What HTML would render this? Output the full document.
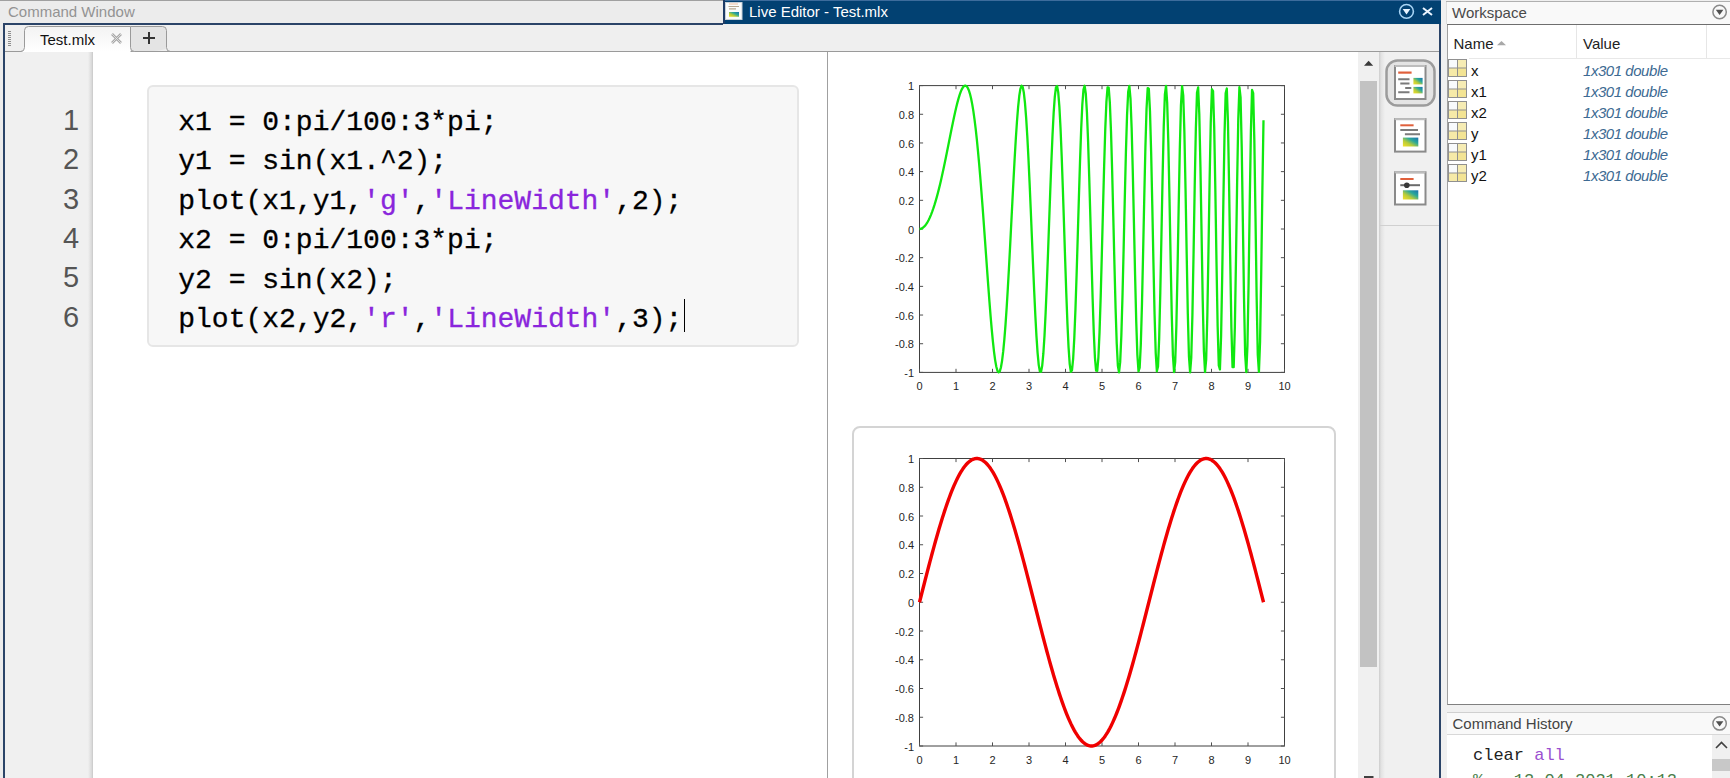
<!DOCTYPE html>
<html><head><meta charset="utf-8">
<style>
*{margin:0;padding:0;box-sizing:border-box}
html,body{width:1730px;height:778px;overflow:hidden;background:#ececec;font-family:"Liberation Sans",sans-serif;position:relative}
.a{position:absolute}
.cl{position:absolute;left:178.25px;height:30px;line-height:30px;font-family:"Liberation Mono",monospace;font-size:28px;color:#000;white-space:pre;-webkit-text-stroke:0.3px currentColor}
.str{color:#8a26dc}
.ln{position:absolute;left:5.7px;width:73.5px;text-align:right;height:32px;line-height:32px;font-size:29px;color:#555}
.wsname{position:absolute;left:1471px;height:21px;line-height:21px;font-size:15px;color:#111}
.wsval{position:absolute;left:1583px;height:21px;line-height:21px;font-size:15px;font-style:italic;letter-spacing:-0.45px;color:#3d6a92}
</style></head><body>
<svg width="0" height="0" style="position:absolute"><defs>
<linearGradient id="par" x1="0" y1="1" x2="1" y2="0"><stop offset="0" stop-color="#f5e02a"/><stop offset="0.35" stop-color="#b8cc3a"/><stop offset="0.65" stop-color="#2aa89a"/><stop offset="1" stop-color="#1a6fb0"/></linearGradient>
</defs></svg>
<!-- top strip -->
<div class="a" style="left:0;top:0;width:723px;height:1px;background:#a0a0a0"></div>
<div class="a" style="left:8px;top:3px;height:18px;line-height:18px;font-size:15px;color:#939393">Command Window</div>
<!-- live editor title -->
<div class="a" style="left:723px;top:0;width:718px;height:24px;background:#024172"></div>
<div class="a" style="left:723px;top:0;width:718px;height:1px;background:#3d6c9c"></div>
<div class="a" style="left:722.5px;top:0;width:2px;height:24px;background:#1e3c66"></div>
<div class="a" style="left:749px;top:3px;height:18px;line-height:18px;font-size:15px;color:#fff">Live Editor - Test.mlx</div>
<!-- blue frame -->
<div class="a" style="left:3px;top:23px;width:720px;height:2px;background:#2b4468"></div>
<div class="a" style="left:3px;top:23px;width:2px;height:755px;background:#2b4468"></div>
<div class="a" style="left:1439px;top:24px;width:2px;height:754px;background:#2b4468"></div>
<!-- tab bar -->
<div class="a" style="left:5px;top:25px;width:1434px;height:26px;background:#efefef"></div>
<div class="a" style="left:5px;top:51px;width:1434px;height:1px;background:#9a9a9a"></div>

<svg class="a" style="left:0;top:0" width="140" height="60" viewBox="0 0 140 60"><defs><linearGradient id="tabg" x1="0" y1="0" x2="0" y2="1"><stop offset="0" stop-color="#f3f3f3"/><stop offset="1" stop-color="#fff"/></linearGradient></defs>
<path d="M24.5,30.5Q24.5,26.5 28.5,26.5H130.5V52H20.5Q24.5,51.5 24.5,47.5Z" fill="url(#tabg)"/>
<path d="M5,51.5H20.5Q24.5,51.5 24.5,47.5V30.5Q24.5,26.5 28.5,26.5H130.5" fill="none" stroke="#9a9a9a" stroke-width="1"/></svg>
<div class="a" style="left:40px;top:30.5px;height:18px;line-height:18px;font-size:15px;color:#111">Test.mlx</div>
<svg class="a" style="left:0;top:0" width="200" height="60" viewBox="0 0 200 60"><path d="M130.5,26.5H162.5Q166.5,26.5 166.5,30.5V47.5Q166.5,51.5 134.5,51.5Q130.5,51.5 130.5,47.5Z" fill="#e4e4e4"/><path d="M130.5,26.5H162.5Q166.5,26.5 166.5,30.5V47.5Q166.5,51.5 170.5,51.5M130.5,26.5V47.5Q130.5,51.5 134.5,51.5H167" fill="none" stroke="#9a9a9a" stroke-width="1"/></svg>
<div class="a" style="left:142.8px;top:36.9px;width:12px;height:2.2px;background:#333"></div>
<div class="a" style="left:147.8px;top:32px;width:2.2px;height:12px;background:#333"></div>
<!-- gutter -->
<div class="a" style="left:5px;top:52px;width:88px;height:726px;background:#f0f0f0"></div>
<div class="a" style="left:88px;top:52px;width:5px;height:726px;background:linear-gradient(to right,#f0f0f0,#dadada 70%,#c8c8c8)"></div>
<div class="ln" style="top:104.00px">1</div>
<div class="ln" style="top:143.37px">2</div>
<div class="ln" style="top:182.74px">3</div>
<div class="ln" style="top:222.11px">4</div>
<div class="ln" style="top:261.48px">5</div>
<div class="ln" style="top:300.85px">6</div>

<!-- editor -->
<div class="a" style="left:93px;top:52px;width:734px;height:726px;background:#fff"></div>
<div class="a" style="left:147px;top:85px;width:652px;height:262px;background:#f7f7f7;border:2px solid #e6e6e6;border-radius:6px"></div>
<div class="cl" style="top:108.10px">x1 = 0:pi/100:3*pi;</div>
<div class="cl" style="top:147.47px">y1 = sin(x1.^2);</div>
<div class="cl" style="top:186.84px">plot(x1,y1,<span class="str">'g'</span>,<span class="str">'LineWidth'</span>,2);</div>
<div class="cl" style="top:226.21px">x2 = 0:pi/100:3*pi;</div>
<div class="cl" style="top:265.58px">y2 = sin(x2);</div>
<div class="cl" style="top:304.95px">plot(x2,y2,<span class="str">'r'</span>,<span class="str">'LineWidth'</span>,3);</div>

<div class="a" style="left:683.5px;top:299px;width:1.6px;height:33px;background:#000"></div>
<div class="a" style="left:827px;top:52px;width:1px;height:726px;background:#a0a0a0"></div>
<!-- output pane -->
<div class="a" style="left:828px;top:52px;width:530px;height:726px;background:#fff"></div>
<div class="a" style="left:852px;top:426px;width:484px;height:400px;border:2px solid #d4d4d4;border-radius:8px"></div>
<svg class="a" style="left:0;top:0" width="1730" height="778" viewBox="0 0 1730 778"><rect x="919.5" y="85.6" width="365.0" height="286.79999999999995" fill="none" stroke="#404040" stroke-width="1"/><path d="M919.50,372.4V368.80M919.50,85.6V89.20M919.5,85.60H923.10M1284.5,85.60H1280.90M956.00,372.4V368.80M956.00,85.6V89.20M919.5,114.28H923.10M1284.5,114.28H1280.90M992.50,372.4V368.80M992.50,85.6V89.20M919.5,142.96H923.10M1284.5,142.96H1280.90M1029.00,372.4V368.80M1029.00,85.6V89.20M919.5,171.64H923.10M1284.5,171.64H1280.90M1065.50,372.4V368.80M1065.50,85.6V89.20M919.5,200.32H923.10M1284.5,200.32H1280.90M1102.00,372.4V368.80M1102.00,85.6V89.20M919.5,229.00H923.10M1284.5,229.00H1280.90M1138.50,372.4V368.80M1138.50,85.6V89.20M919.5,257.68H923.10M1284.5,257.68H1280.90M1175.00,372.4V368.80M1175.00,85.6V89.20M919.5,286.36H923.10M1284.5,286.36H1280.90M1211.50,372.4V368.80M1211.50,85.6V89.20M919.5,315.04H923.10M1284.5,315.04H1280.90M1248.00,372.4V368.80M1248.00,85.6V89.20M919.5,343.72H923.10M1284.5,343.72H1280.90M1284.50,372.4V368.80M1284.50,85.6V89.20M919.5,372.40H923.10M1284.5,372.40H1280.90" stroke="#505050" stroke-width="1" fill="none"/><g font-family="Liberation Sans" font-size="11" fill="#262626"><text x="919.50" y="389.90" text-anchor="middle">0</text><text x="956.00" y="389.90" text-anchor="middle">1</text><text x="992.50" y="389.90" text-anchor="middle">2</text><text x="1029.00" y="389.90" text-anchor="middle">3</text><text x="1065.50" y="389.90" text-anchor="middle">4</text><text x="1102.00" y="389.90" text-anchor="middle">5</text><text x="1138.50" y="389.90" text-anchor="middle">6</text><text x="1175.00" y="389.90" text-anchor="middle">7</text><text x="1211.50" y="389.90" text-anchor="middle">8</text><text x="1248.00" y="389.90" text-anchor="middle">9</text><text x="1284.50" y="389.90" text-anchor="middle">10</text><text x="914.00" y="90.30" text-anchor="end">1</text><text x="914.00" y="118.98" text-anchor="end">0.8</text><text x="914.00" y="147.66" text-anchor="end">0.6</text><text x="914.00" y="176.34" text-anchor="end">0.4</text><text x="914.00" y="205.02" text-anchor="end">0.2</text><text x="914.00" y="233.70" text-anchor="end">0</text><text x="914.00" y="262.38" text-anchor="end">-0.2</text><text x="914.00" y="291.06" text-anchor="end">-0.4</text><text x="914.00" y="319.74" text-anchor="end">-0.6</text><text x="914.00" y="348.42" text-anchor="end">-0.8</text><text x="914.00" y="377.10" text-anchor="end">-1</text></g><path d="M919.50,229.00 L920.65,228.86 L921.79,228.43 L922.94,227.73 L924.09,226.74 L925.23,225.46 L926.38,223.91 L927.53,222.07 L928.67,219.95 L929.82,217.55 L930.97,214.87 L932.11,211.92 L933.26,208.69 L934.41,205.19 L935.55,201.43 L936.70,197.42 L937.85,193.15 L938.99,188.65 L940.14,183.92 L941.29,178.98 L942.43,173.85 L943.58,168.54 L944.73,163.08 L945.87,157.49 L947.02,151.80 L948.17,146.05 L949.31,140.27 L950.46,134.50 L951.61,128.79 L952.75,123.18 L953.90,117.72 L955.05,112.48 L956.19,107.51 L957.34,102.88 L958.49,98.65 L959.63,94.88 L960.78,91.66 L961.93,89.05 L963.07,87.12 L964.22,85.95 L965.37,85.60 L966.51,86.16 L967.66,87.67 L968.81,90.20 L969.95,93.81 L971.10,98.52 L972.25,104.38 L973.39,111.41 L974.54,119.61 L975.69,128.98 L976.83,139.48 L977.98,151.07 L979.13,163.69 L980.27,177.25 L981.42,191.63 L982.57,206.71 L983.71,222.34 L984.86,238.32 L986.01,254.47 L987.15,270.56 L988.30,286.35 L989.45,301.60 L990.59,316.04 L991.74,329.41 L992.89,341.42 L994.03,351.81 L995.18,360.33 L996.33,366.74 L997.47,370.82 L998.62,372.39 L999.77,371.30 L1000.91,367.47 L1002.06,360.85 L1003.21,351.47 L1004.35,339.40 L1005.50,324.79 L1006.65,307.89 L1007.79,288.97 L1008.94,268.43 L1010.09,246.67 L1011.23,224.22 L1012.38,201.60 L1013.53,179.41 L1014.67,158.25 L1015.82,138.74 L1016.97,121.49 L1018.11,107.08 L1019.26,96.03 L1020.41,88.78 L1021.55,85.69 L1022.70,87.01 L1023.85,92.84 L1024.99,103.13 L1026.14,117.70 L1027.29,136.18 L1028.43,158.06 L1029.58,182.67 L1030.73,209.21 L1031.87,236.74 L1033.02,264.26 L1034.17,290.71 L1035.31,315.01 L1036.46,336.12 L1037.61,353.09 L1038.75,365.09 L1039.90,371.46 L1041.05,371.77 L1042.19,365.82 L1043.34,353.71 L1044.49,335.81 L1045.63,312.80 L1046.78,285.64 L1047.93,255.51 L1049.07,223.82 L1050.22,192.11 L1051.37,162.00 L1052.52,135.07 L1053.66,112.85 L1054.81,96.63 L1055.96,87.45 L1057.10,86.00 L1058.25,92.56 L1059.40,106.95 L1060.54,128.53 L1061.69,156.20 L1062.84,188.45 L1063.98,223.41 L1065.13,258.99 L1066.28,292.97 L1067.42,323.13 L1068.57,347.42 L1069.72,364.12 L1070.86,371.92 L1072.01,370.09 L1073.16,358.55 L1074.30,337.88 L1075.45,309.35 L1076.60,274.83 L1077.74,236.72 L1078.89,197.77 L1080.04,160.90 L1081.18,128.95 L1082.33,104.50 L1083.48,89.64 L1084.62,85.75 L1085.77,93.36 L1086.92,112.10 L1088.06,140.64 L1089.21,176.77 L1090.36,217.59 L1091.50,259.66 L1092.65,299.32 L1093.80,333.02 L1094.94,357.61 L1096.09,370.68 L1097.24,370.79 L1098.38,357.70 L1099.53,332.38 L1100.68,297.03 L1101.82,254.87 L1102.97,209.92 L1104.12,166.59 L1105.26,129.27 L1106.41,101.87 L1107.56,87.39 L1108.70,87.58 L1109.85,102.69 L1111.00,131.36 L1112.14,170.74 L1113.29,216.72 L1114.44,264.31 L1115.58,308.23 L1116.73,343.43 L1117.88,365.72 L1119.02,372.31 L1120.17,362.14 L1121.32,336.15 L1122.46,297.18 L1123.61,249.73 L1124.76,199.49 L1125.90,152.63 L1127.05,115.09 L1128.20,91.78 L1129.34,85.91 L1130.49,98.52 L1131.64,128.27 L1132.78,171.49 L1133.93,222.62 L1135.08,274.87 L1136.22,321.13 L1137.37,354.91 L1138.52,371.32 L1139.66,367.76 L1140.81,344.45 L1141.96,304.43 L1143.10,253.25 L1144.25,198.27 L1145.40,147.58 L1146.54,108.82 L1147.69,88.05 L1148.84,88.71 L1149.98,110.99 L1151.13,151.77 L1152.28,204.87 L1153.42,262.06 L1154.57,314.21 L1155.72,352.81 L1156.86,371.35 L1158.01,366.48 L1159.16,338.69 L1160.30,292.32 L1161.45,235.00 L1162.60,176.39 L1163.74,126.62 L1164.89,94.50 L1166.04,85.94 L1167.18,102.78 L1168.33,142.34 L1169.48,197.76 L1170.62,259.13 L1171.77,315.21 L1172.92,355.49 L1174.06,372.20 L1175.21,361.86 L1176.36,326.09 L1177.50,271.46 L1178.65,208.35 L1179.80,149.03 L1180.94,105.28 L1182.09,86.05 L1183.24,95.51 L1184.38,132.11 L1185.53,188.69 L1186.68,253.83 L1187.82,314.05 L1188.97,356.66 L1190.12,372.40 L1191.26,357.58 L1192.41,315.01 L1193.56,253.61 L1194.70,186.59 L1195.85,128.66 L1197.00,92.84 L1198.14,87.42 L1199.29,114.00 L1200.44,166.89 L1201.58,234.25 L1202.73,300.65 L1203.88,350.57 L1205.02,372.06 L1206.17,359.70 L1207.32,316.05 L1208.46,251.27 L1209.61,180.84 L1210.76,121.94 L1211.90,89.23 L1213.05,91.14 L1214.20,127.57 L1215.34,189.73 L1216.49,262.09 L1217.64,326.23 L1218.78,365.50 L1219.93,369.41 L1221.08,336.54 L1222.22,275.18 L1223.37,201.32 L1224.52,134.62 L1225.66,93.17 L1226.81,88.50 L1227.96,122.30 L1229.10,185.64 L1230.25,261.24 L1231.40,328.07 L1232.54,367.20 L1233.69,367.22 L1234.84,327.72 L1235.98,259.67 L1237.13,182.50 L1238.28,118.66 L1239.42,87.06 L1240.57,97.41 L1241.72,147.04 L1242.86,221.44 L1244.01,298.36 L1245.16,354.41 L1246.30,372.18 L1247.45,345.81 L1248.60,283.05 L1249.74,203.18 L1250.89,131.20 L1252.04,90.02 L1253.18,93.09 L1254.33,139.86 L1255.48,215.62 L1256.62,295.97 L1257.77,354.60 L1258.92,371.94 L1260.06,341.84 L1261.21,273.91 L1262.36,190.66 L1263.50,120.15" fill="none" stroke="#10e810" stroke-width="2.3" stroke-linejoin="round" stroke-linecap="butt"/><rect x="919.5" y="458.5" width="365.0" height="287.5" fill="none" stroke="#404040" stroke-width="1"/><path d="M919.50,746.0V742.40M919.50,458.5V462.10M919.5,458.50H923.10M1284.5,458.50H1280.90M956.00,746.0V742.40M956.00,458.5V462.10M919.5,487.25H923.10M1284.5,487.25H1280.90M992.50,746.0V742.40M992.50,458.5V462.10M919.5,516.00H923.10M1284.5,516.00H1280.90M1029.00,746.0V742.40M1029.00,458.5V462.10M919.5,544.75H923.10M1284.5,544.75H1280.90M1065.50,746.0V742.40M1065.50,458.5V462.10M919.5,573.50H923.10M1284.5,573.50H1280.90M1102.00,746.0V742.40M1102.00,458.5V462.10M919.5,602.25H923.10M1284.5,602.25H1280.90M1138.50,746.0V742.40M1138.50,458.5V462.10M919.5,631.00H923.10M1284.5,631.00H1280.90M1175.00,746.0V742.40M1175.00,458.5V462.10M919.5,659.75H923.10M1284.5,659.75H1280.90M1211.50,746.0V742.40M1211.50,458.5V462.10M919.5,688.50H923.10M1284.5,688.50H1280.90M1248.00,746.0V742.40M1248.00,458.5V462.10M919.5,717.25H923.10M1284.5,717.25H1280.90M1284.50,746.0V742.40M1284.50,458.5V462.10M919.5,746.00H923.10M1284.5,746.00H1280.90" stroke="#505050" stroke-width="1" fill="none"/><g font-family="Liberation Sans" font-size="11" fill="#262626"><text x="919.50" y="763.50" text-anchor="middle">0</text><text x="956.00" y="763.50" text-anchor="middle">1</text><text x="992.50" y="763.50" text-anchor="middle">2</text><text x="1029.00" y="763.50" text-anchor="middle">3</text><text x="1065.50" y="763.50" text-anchor="middle">4</text><text x="1102.00" y="763.50" text-anchor="middle">5</text><text x="1138.50" y="763.50" text-anchor="middle">6</text><text x="1175.00" y="763.50" text-anchor="middle">7</text><text x="1211.50" y="763.50" text-anchor="middle">8</text><text x="1248.00" y="763.50" text-anchor="middle">9</text><text x="1284.50" y="763.50" text-anchor="middle">10</text><text x="914.00" y="463.20" text-anchor="end">1</text><text x="914.00" y="491.95" text-anchor="end">0.8</text><text x="914.00" y="520.70" text-anchor="end">0.6</text><text x="914.00" y="549.45" text-anchor="end">0.4</text><text x="914.00" y="578.20" text-anchor="end">0.2</text><text x="914.00" y="606.95" text-anchor="end">0</text><text x="914.00" y="635.70" text-anchor="end">-0.2</text><text x="914.00" y="664.45" text-anchor="end">-0.4</text><text x="914.00" y="693.20" text-anchor="end">-0.6</text><text x="914.00" y="721.95" text-anchor="end">-0.8</text><text x="914.00" y="750.70" text-anchor="end">-1</text></g><path d="M919.50,602.25 L920.65,597.73 L921.79,593.22 L922.94,588.72 L924.09,584.23 L925.23,579.76 L926.38,575.31 L927.53,570.89 L928.67,566.50 L929.82,562.15 L930.97,557.83 L932.11,553.56 L933.26,549.33 L934.41,545.16 L935.55,541.04 L936.70,536.99 L937.85,533.00 L938.99,529.08 L940.14,525.22 L941.29,521.45 L942.43,517.76 L943.58,514.14 L944.73,510.62 L945.87,507.19 L947.02,503.85 L948.17,500.60 L949.31,497.46 L950.46,494.42 L951.61,491.49 L952.75,488.67 L953.90,485.95 L955.05,483.36 L956.19,480.88 L957.34,478.52 L958.49,476.28 L959.63,474.17 L960.78,472.18 L961.93,470.32 L963.07,468.59 L964.22,467.00 L965.37,465.54 L966.51,464.21 L967.66,463.02 L968.81,461.96 L969.95,461.05 L971.10,460.27 L972.25,459.63 L973.39,459.14 L974.54,458.78 L975.69,458.57 L976.83,458.50 L977.98,458.57 L979.13,458.78 L980.27,459.14 L981.42,459.63 L982.57,460.27 L983.71,461.05 L984.86,461.96 L986.01,463.02 L987.15,464.21 L988.30,465.54 L989.45,467.00 L990.59,468.59 L991.74,470.32 L992.89,472.18 L994.03,474.17 L995.18,476.28 L996.33,478.52 L997.47,480.88 L998.62,483.36 L999.77,485.95 L1000.91,488.67 L1002.06,491.49 L1003.21,494.42 L1004.35,497.46 L1005.50,500.60 L1006.65,503.85 L1007.79,507.19 L1008.94,510.62 L1010.09,514.14 L1011.23,517.76 L1012.38,521.45 L1013.53,525.22 L1014.67,529.08 L1015.82,533.00 L1016.97,536.99 L1018.11,541.04 L1019.26,545.16 L1020.41,549.33 L1021.55,553.56 L1022.70,557.83 L1023.85,562.15 L1024.99,566.50 L1026.14,570.89 L1027.29,575.31 L1028.43,579.76 L1029.58,584.23 L1030.73,588.72 L1031.87,593.22 L1033.02,597.73 L1034.17,602.25 L1035.31,606.77 L1036.46,611.28 L1037.61,615.78 L1038.75,620.27 L1039.90,624.74 L1041.05,629.19 L1042.19,633.61 L1043.34,638.00 L1044.49,642.35 L1045.63,646.67 L1046.78,650.94 L1047.93,655.17 L1049.07,659.34 L1050.22,663.46 L1051.37,667.51 L1052.52,671.50 L1053.66,675.42 L1054.81,679.28 L1055.96,683.05 L1057.10,686.74 L1058.25,690.36 L1059.40,693.88 L1060.54,697.31 L1061.69,700.65 L1062.84,703.90 L1063.98,707.04 L1065.13,710.08 L1066.28,713.01 L1067.42,715.83 L1068.57,718.55 L1069.72,721.14 L1070.86,723.62 L1072.01,725.98 L1073.16,728.22 L1074.30,730.33 L1075.45,732.32 L1076.60,734.18 L1077.74,735.91 L1078.89,737.50 L1080.04,738.96 L1081.18,740.29 L1082.33,741.48 L1083.48,742.54 L1084.62,743.45 L1085.77,744.23 L1086.92,744.87 L1088.06,745.36 L1089.21,745.72 L1090.36,745.93 L1091.50,746.00 L1092.65,745.93 L1093.80,745.72 L1094.94,745.36 L1096.09,744.87 L1097.24,744.23 L1098.38,743.45 L1099.53,742.54 L1100.68,741.48 L1101.82,740.29 L1102.97,738.96 L1104.12,737.50 L1105.26,735.91 L1106.41,734.18 L1107.56,732.32 L1108.70,730.33 L1109.85,728.22 L1111.00,725.98 L1112.14,723.62 L1113.29,721.14 L1114.44,718.55 L1115.58,715.83 L1116.73,713.01 L1117.88,710.08 L1119.02,707.04 L1120.17,703.90 L1121.32,700.65 L1122.46,697.31 L1123.61,693.88 L1124.76,690.36 L1125.90,686.74 L1127.05,683.05 L1128.20,679.28 L1129.34,675.42 L1130.49,671.50 L1131.64,667.51 L1132.78,663.46 L1133.93,659.34 L1135.08,655.17 L1136.22,650.94 L1137.37,646.67 L1138.52,642.35 L1139.66,638.00 L1140.81,633.61 L1141.96,629.19 L1143.10,624.74 L1144.25,620.27 L1145.40,615.78 L1146.54,611.28 L1147.69,606.77 L1148.84,602.25 L1149.98,597.73 L1151.13,593.22 L1152.28,588.72 L1153.42,584.23 L1154.57,579.76 L1155.72,575.31 L1156.86,570.89 L1158.01,566.50 L1159.16,562.15 L1160.30,557.83 L1161.45,553.56 L1162.60,549.33 L1163.74,545.16 L1164.89,541.04 L1166.04,536.99 L1167.18,533.00 L1168.33,529.08 L1169.48,525.22 L1170.62,521.45 L1171.77,517.76 L1172.92,514.14 L1174.06,510.62 L1175.21,507.19 L1176.36,503.85 L1177.50,500.60 L1178.65,497.46 L1179.80,494.42 L1180.94,491.49 L1182.09,488.67 L1183.24,485.95 L1184.38,483.36 L1185.53,480.88 L1186.68,478.52 L1187.82,476.28 L1188.97,474.17 L1190.12,472.18 L1191.26,470.32 L1192.41,468.59 L1193.56,467.00 L1194.70,465.54 L1195.85,464.21 L1197.00,463.02 L1198.14,461.96 L1199.29,461.05 L1200.44,460.27 L1201.58,459.63 L1202.73,459.14 L1203.88,458.78 L1205.02,458.57 L1206.17,458.50 L1207.32,458.57 L1208.46,458.78 L1209.61,459.14 L1210.76,459.63 L1211.90,460.27 L1213.05,461.05 L1214.20,461.96 L1215.34,463.02 L1216.49,464.21 L1217.64,465.54 L1218.78,467.00 L1219.93,468.59 L1221.08,470.32 L1222.22,472.18 L1223.37,474.17 L1224.52,476.28 L1225.66,478.52 L1226.81,480.88 L1227.96,483.36 L1229.10,485.95 L1230.25,488.67 L1231.40,491.49 L1232.54,494.42 L1233.69,497.46 L1234.84,500.60 L1235.98,503.85 L1237.13,507.19 L1238.28,510.62 L1239.42,514.14 L1240.57,517.76 L1241.72,521.45 L1242.86,525.22 L1244.01,529.08 L1245.16,533.00 L1246.30,536.99 L1247.45,541.04 L1248.60,545.16 L1249.74,549.33 L1250.89,553.56 L1252.04,557.83 L1253.18,562.15 L1254.33,566.50 L1255.48,570.89 L1256.62,575.31 L1257.77,579.76 L1258.92,584.23 L1260.06,588.72 L1261.21,593.22 L1262.36,597.73 L1263.50,602.25" fill="none" stroke="#f00000" stroke-width="3.4" stroke-linejoin="round" stroke-linecap="butt"/></svg>
<!-- scrollbar -->
<div class="a" style="left:1358px;top:52px;width:21px;height:726px;background:#f0f0f0"></div>
<div class="a" style="left:1360px;top:81px;width:17px;height:586px;background:#c2c2c2"></div>
<!-- toolbar -->
<div class="a" style="left:1379px;top:52px;width:60px;height:726px;background:#f0f0f0"></div>
<div class="a" style="left:1379px;top:52px;width:6px;height:726px;background:linear-gradient(to right,#cccccc,#e2e2e2 35%,#f0f0f0)"></div>
<div class="a" style="left:1380px;top:225px;width:59px;height:1px;background:#d0d0d0"></div>
<!-- workspace -->
<div class="a" style="left:1441px;top:0;width:289px;height:778px;background:#f0f0f0"></div>
<div class="a" style="left:1446px;top:1px;width:284px;height:1px;background:#b0b0b0"></div>
<div class="a" style="left:1446px;top:2px;width:284px;height:22px;background:#f9f9f9;border-left:1px solid #dcdcdc"></div>
<div class="a" style="left:1452px;top:3.7px;height:18px;line-height:18px;font-size:15px;color:#4a4a4a">Workspace</div>
<div class="a" style="left:1447px;top:24px;width:283px;height:1px;background:#6e6e6e"></div>
<div class="a" style="left:1447px;top:25px;width:283px;height:680px;background:#fff;border-left:1px solid #a0a0a0;border-bottom:1px solid #808080"></div>
<div class="a" style="left:1453.5px;top:35px;height:18px;line-height:18px;font-size:15px;color:#222">Name</div>
<div class="a" style="left:1576px;top:25px;width:1px;height:33px;background:#e6e6e6"></div>
<div class="a" style="left:1706px;top:25px;width:1px;height:33px;background:#e6e6e6"></div>
<div class="a" style="left:1583px;top:35px;height:18px;line-height:18px;font-size:15px;color:#222">Value</div>
<div class="a" style="left:1469px;top:58px;width:261px;height:1px;background:#e8e8e8"></div>
<svg class="a" style="left:1448px;top:59.3px" width="19" height="18" viewBox="0 0 19 18"><rect x="0" y="0" width="19" height="18" fill="#909090"/><rect x="1" y="1" width="8" height="7.5" fill="#f8fafc"/><rect x="10" y="1" width="8" height="7.5" fill="#f6ecb4"/><rect x="1" y="9.5" width="8" height="7.5" fill="#f6eaa8"/><rect x="10" y="9.5" width="8" height="7.5" fill="#f3e494"/></svg>
<div class="wsname" style="top:60.3px">x</div><div class="wsval" style="top:60px">1x301 double</div>
<svg class="a" style="left:1448px;top:80.3px" width="19" height="18" viewBox="0 0 19 18"><rect x="0" y="0" width="19" height="18" fill="#909090"/><rect x="1" y="1" width="8" height="7.5" fill="#f8fafc"/><rect x="10" y="1" width="8" height="7.5" fill="#f6ecb4"/><rect x="1" y="9.5" width="8" height="7.5" fill="#f6eaa8"/><rect x="10" y="9.5" width="8" height="7.5" fill="#f3e494"/></svg>
<div class="wsname" style="top:81.3px">x1</div><div class="wsval" style="top:81px">1x301 double</div>
<svg class="a" style="left:1448px;top:101.3px" width="19" height="18" viewBox="0 0 19 18"><rect x="0" y="0" width="19" height="18" fill="#909090"/><rect x="1" y="1" width="8" height="7.5" fill="#f8fafc"/><rect x="10" y="1" width="8" height="7.5" fill="#f6ecb4"/><rect x="1" y="9.5" width="8" height="7.5" fill="#f6eaa8"/><rect x="10" y="9.5" width="8" height="7.5" fill="#f3e494"/></svg>
<div class="wsname" style="top:102.3px">x2</div><div class="wsval" style="top:102px">1x301 double</div>
<svg class="a" style="left:1448px;top:122.3px" width="19" height="18" viewBox="0 0 19 18"><rect x="0" y="0" width="19" height="18" fill="#909090"/><rect x="1" y="1" width="8" height="7.5" fill="#f8fafc"/><rect x="10" y="1" width="8" height="7.5" fill="#f6ecb4"/><rect x="1" y="9.5" width="8" height="7.5" fill="#f6eaa8"/><rect x="10" y="9.5" width="8" height="7.5" fill="#f3e494"/></svg>
<div class="wsname" style="top:123.3px">y</div><div class="wsval" style="top:123px">1x301 double</div>
<svg class="a" style="left:1448px;top:143.3px" width="19" height="18" viewBox="0 0 19 18"><rect x="0" y="0" width="19" height="18" fill="#909090"/><rect x="1" y="1" width="8" height="7.5" fill="#f8fafc"/><rect x="10" y="1" width="8" height="7.5" fill="#f6ecb4"/><rect x="1" y="9.5" width="8" height="7.5" fill="#f6eaa8"/><rect x="10" y="9.5" width="8" height="7.5" fill="#f3e494"/></svg>
<div class="wsname" style="top:144.3px">y1</div><div class="wsval" style="top:144px">1x301 double</div>
<svg class="a" style="left:1448px;top:164.3px" width="19" height="18" viewBox="0 0 19 18"><rect x="0" y="0" width="19" height="18" fill="#909090"/><rect x="1" y="1" width="8" height="7.5" fill="#f8fafc"/><rect x="10" y="1" width="8" height="7.5" fill="#f6ecb4"/><rect x="1" y="9.5" width="8" height="7.5" fill="#f6eaa8"/><rect x="10" y="9.5" width="8" height="7.5" fill="#f3e494"/></svg>
<div class="wsname" style="top:165.3px">y2</div><div class="wsval" style="top:165px">1x301 double</div>

<!-- command history -->
<div class="a" style="left:1447px;top:712px;width:283px;height:1px;background:#d0d0d0"></div>
<div class="a" style="left:1447px;top:713px;width:283px;height:21px;background:#f9f9f9"></div>
<div class="a" style="left:1452.5px;top:715px;height:18px;line-height:18px;font-size:15px;color:#444">Command History</div>
<div class="a" style="left:1447px;top:734px;width:283px;height:44px;background:#fff;border-top:1px solid #d8d8d8"></div>
<div class="a" style="left:1712px;top:735px;width:18px;height:43px;background:#f0f0f0"></div>
<div class="a" style="left:1712px;top:759px;width:18px;height:12px;background:#c8c8c8"></div>
<div class="a" style="left:1473px;top:746px;height:20px;line-height:20px;font-family:'Liberation Mono',monospace;font-size:17px;color:#222;white-space:pre">clear <span style="color:#9b50d0">all</span></div>
<div class="a" style="left:1473px;top:771px;height:20px;line-height:20px;font-family:'Liberation Mono',monospace;font-size:17px;color:#4a7e4a;white-space:pre">%-- 12-04-2021 10:12</div>
<svg class="a" style="left:0;top:0" width="1730" height="778" viewBox="0 0 1730 778">
<!-- title bar icon -->
<rect x="725.5" y="2.5" width="16.5" height="17" fill="#fafcfc" stroke="#c8d0d8" stroke-width="1"/>
<path d="M729,4H738" stroke="#f0c0a0" stroke-width="1"/>
<path d="M728.5,6.5H739M729,8.8H736" stroke="#b8a890" stroke-width="1.2"/>
<rect x="729" y="12" width="10" height="4.8" fill="url(#par)"/>
<!-- dropdown circle (title) -->
<circle cx="1406.5" cy="11.4" r="6.9" fill="none" stroke="#a8d4f4" stroke-width="1.6"/>
<path d="M1402.7,9H1410.3L1406.5,14.5Z" fill="#e8f4ff"/>
<path d="M1423,8L1432,15M1432,8L1423,15" stroke="#eaf4ff" stroke-width="2"/>
<!-- tab grip -->
<path d="M8,31.5H11M8,33.5H11M8,35.5H11M8,37.5H11M8,39.5H11M8,41.5H11M8,43.5H11M8,45.5H11" stroke="#8c8c8c" stroke-width="1"/>
<!-- tab close -->
<path d="M112,34L121,43M121,34L112,43" stroke="#a8a8a8" stroke-width="2.6"/>
<path d="M112,34L121,43M121,34L112,43" stroke="#e8e8e8" stroke-width="0.8"/>
<!-- scroll arrows -->
<path d="M1364,65.8H1373.2L1368.6,60.8Z" fill="#3a3a3a"/>
<path d="M1364,776H1373.5V778H1364Z" fill="#404040"/>
<rect x="1386.5" y="60.5" width="48" height="45" rx="11" fill="#e4e4e4" stroke="#9c9c9c" stroke-width="2.5"/><rect x="1395" y="66" width="30.5" height="33" fill="#fff" stroke="#8a8a8a" stroke-width="2"/><path d="M1394.5,66H1425.5" stroke="#bdbdbd" stroke-width="2"/><path d="M1398.2,72.6H1411.6" stroke="#e0603c" stroke-width="2.2"/><path d="M1398.2,79.2H1409.5M1400.3,83.6H1409.5M1405.2,88H1411.3M1398.2,92.3H1409.5" stroke="#7b7b7b" stroke-width="2"/><rect x="1413.4" y="77.9" width="9.2" height="6.5" fill="url(#par)"/><rect x="1413.4" y="86.9" width="9.2" height="6.5" fill="url(#par)"/><rect x="1395" y="119.1" width="30.5" height="32.5" fill="#fff" stroke="#8a8a8a" stroke-width="2"/><path d="M1394.5,119.1H1425.5" stroke="#bdbdbd" stroke-width="2"/><path d="M1400.3,125.3H1413.6" stroke="#e0603c" stroke-width="2"/><path d="M1400.3,130H1418M1404.9,134.3H1420" stroke="#7b7b7b" stroke-width="2"/><rect x="1402.9" y="137.6" width="15.4" height="8.9" fill="url(#par)"/><rect x="1395" y="172.3" width="30.5" height="32.2" fill="#fff" stroke="#8a8a8a" stroke-width="2"/><path d="M1394.5,172.3H1425.5" stroke="#bdbdbd" stroke-width="2"/><path d="M1400.3,179H1413.6" stroke="#e0603c" stroke-width="2"/><path d="M1400.3,185.2H1420" stroke="#6b6b6b" stroke-width="2"/><circle cx="1406.8" cy="185.2" r="2.8" fill="#3a3a3a"/><rect x="1402.9" y="190.3" width="15.4" height="9.2" fill="url(#par)"/>
<!-- workspace dropdown -->
<circle cx="1719.6" cy="12" r="6.7" fill="none" stroke="#8a8a8a" stroke-width="1.5"/>
<path d="M1715.8,9.8H1723.4L1719.6,15Z" fill="#505050"/>
<circle cx="1719.6" cy="723.4" r="6.7" fill="none" stroke="#8a8a8a" stroke-width="1.5"/>
<path d="M1715.8,721.2H1723.4L1719.6,726.4Z" fill="#505050"/>
<!-- sort triangle -->
<path d="M1497,45.2H1506L1501.5,41Z" fill="#a8a8a8"/>
<!-- history scroll up -->
<path d="M1716,748L1721.5,742.5L1727,748" fill="none" stroke="#404040" stroke-width="1.6"/>
</svg>
</body></html>
